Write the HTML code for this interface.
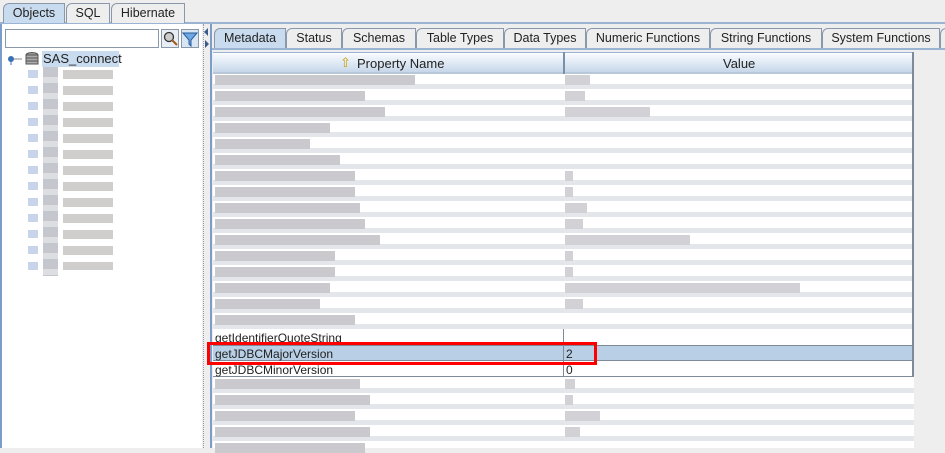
<!DOCTYPE html>
<html><head><meta charset="utf-8"><style>
*{box-sizing:border-box;margin:0;padding:0}
body{width:945px;height:448px;overflow:hidden;background:#eeeeee;font-family:"Liberation Sans",sans-serif;font-size:12px;color:#222;position:relative}
.a{position:absolute}
.tab{position:absolute;height:20px;border:1px solid #8a98aa;border-bottom:none;background:#eeeeee;font-size:12.5px;text-align:center;line-height:18px;border-radius:6px 0 0 0}
.sel{background:#c9dcef}
.b{position:absolute;height:10px;background:#cacace}
.v{position:absolute;height:10px;background:#d2d2d6}
.txt{position:absolute;left:215px;font-size:12px;line-height:16px}
</style></head><body>
<div class="a" style="left:0;top:22px;width:945px;height:2px;background:#9cb4d4"></div>
<div class="tab sel" style="left:3px;top:3px;width:62px;height:20px">Objects</div>
<div class="tab" style="left:66px;top:3px;width:44px">SQL</div>
<div class="tab" style="left:111px;top:3px;width:74px">Hibernate</div>
<div class="a" style="left:0;top:24px;width:202px;height:424px;background:#fff;border-left:2px solid #7e9cc8"></div>
<div class="a" style="left:5px;top:29px;width:154px;height:19px;border:1px solid #8a98aa;background:#fff"></div>
<div class="a" style="left:161px;top:29px;width:18px;height:19px;border:1px solid #8a98aa;background:#e8eef6"></div>
<svg class="a" style="left:162px;top:30px" width="17" height="17"><circle cx="7" cy="7" r="4.5" fill="#ccc" stroke="#333" stroke-width="1.3"/><line x1="10" y1="10" x2="15" y2="15" stroke="#a05a1c" stroke-width="2"/></svg>
<div class="a" style="left:181px;top:29px;width:18px;height:19px;border:1px solid #8a98aa;background:#d8e6f4"></div>
<svg class="a" style="left:182px;top:31px" width="17" height="16"><path d="M1 2 H15 L9 9 V15 L7 13 V9 Z" fill="#6fa8e0" stroke="#245a9a"/></svg>
<svg class="a" style="left:7px;top:53px" width="16" height="12"><circle cx="4" cy="6" r="3" fill="#3a70b8"/><line x1="4" y1="6" x2="4" y2="12" stroke="#3a70b8"/><line x1="7" y1="6" x2="15" y2="6" stroke="#888"/></svg>
<svg class="a" style="left:25px;top:52px" width="14" height="14"><ellipse cx="7" cy="3" rx="6" ry="2.5" fill="#999" stroke="#555"/><rect x="1" y="3" width="12" height="9" fill="#aaa" stroke="#555"/><line x1="1" y1="6" x2="13" y2="6" stroke="#555"/><line x1="1" y1="9" x2="13" y2="9" stroke="#555"/></svg>
<div class="a" style="left:42px;top:51px;width:77px;height:16px;background:#c9dcef;font-size:13px;line-height:16px;padding-left:1px">SAS_connect</div>
<div class="a" style="left:28px;top:70px;width:10px;height:200px;background:repeating-linear-gradient(#c8d4ea 0 8px,#fff 8px 16px)"></div>
<div class="a" style="left:43px;top:67px;width:15px;height:209px;background:repeating-linear-gradient(#c4c8ce 0 10px,#dcdee2 10px 16px)"></div>
<div class="a" style="left:63px;top:70px;width:50px;height:200px;background:repeating-linear-gradient(#d0cdcd 0 9px,#fff 9px 16px)"></div>
<div class="a" style="left:203px;top:24px;width:7px;height:424px;background:#eeeeee;border-left:1px dotted #99a"></div>
<div class="a" style="left:204px;top:28px;width:0;height:0;border:4px solid transparent;border-right:4px solid #3a5a8a;border-left:none"></div>
<div class="a" style="left:205px;top:40px;width:0;height:0;border:4px solid transparent;border-left:4px solid #3a5a8a;border-right:none"></div>
<div class="a" style="left:210px;top:24px;width:735px;height:424px;border-left:2px solid #7e9cc8;background:#eeeeee"></div>
<div class="a" style="left:212px;top:48px;width:733px;height:2px;background:#9cb4d4"></div>
<div class="tab sel" style="left:214px;top:28px;width:72px">Metadata</div>
<div class="tab" style="left:286px;top:28px;width:56px">Status</div>
<div class="tab" style="left:342px;top:28px;width:74px">Schemas</div>
<div class="tab" style="left:416px;top:28px;width:88px">Table Types</div>
<div class="tab" style="left:504px;top:28px;width:82px">Data Types</div>
<div class="tab" style="left:586px;top:28px;width:124px">Numeric Functions</div>
<div class="tab" style="left:710px;top:28px;width:112px">String Functions</div>
<div class="tab" style="left:822px;top:28px;width:118px">System Functions</div>
<div class="tab" style="left:940px;top:28px;width:10px"></div>
<div class="a" style="left:213px;top:52px;width:701px;height:396px;background:repeating-linear-gradient(#fff 0 11px,#e3e6ea 11px 16px);background-position:0 21px"></div>
<div class="a" style="left:213px;top:52px;width:701px;height:22px;background:linear-gradient(#fafcff,#c6d7ea);border-top:1px solid #9cb4d4;border-bottom:2px solid #b8c8d8"></div>
<div class="a" style="left:563px;top:52px;width:2px;height:22px;background:#7890a8"></div>
<div class="a" style="left:912px;top:52px;width:2px;height:325px;background:#7f8a99"></div>
<div class="a" style="left:340px;top:55px;font-size:13px;color:#c9a000">⇧</div>
<div class="a" style="left:357px;top:56px;font-size:13px">Property Name</div>
<div class="a" style="left:723px;top:56px;font-size:13px">Value</div>
<div class="b" style="left:215px;top:75px;width:200px"></div><div class="v" style="left:565px;top:75px;width:25px"></div>
<div class="b" style="left:215px;top:91px;width:150px"></div><div class="v" style="left:565px;top:91px;width:20px"></div>
<div class="b" style="left:215px;top:107px;width:170px"></div><div class="v" style="left:565px;top:107px;width:85px"></div>
<div class="b" style="left:215px;top:123px;width:115px"></div>
<div class="b" style="left:215px;top:139px;width:95px"></div>
<div class="b" style="left:215px;top:155px;width:125px"></div>
<div class="b" style="left:215px;top:171px;width:140px"></div><div class="v" style="left:565px;top:171px;width:8px"></div>
<div class="b" style="left:215px;top:187px;width:140px"></div><div class="v" style="left:565px;top:187px;width:8px"></div>
<div class="b" style="left:215px;top:203px;width:145px"></div><div class="v" style="left:565px;top:203px;width:22px"></div>
<div class="b" style="left:215px;top:219px;width:150px"></div><div class="v" style="left:565px;top:219px;width:18px"></div>
<div class="b" style="left:215px;top:235px;width:165px"></div><div class="v" style="left:565px;top:235px;width:125px"></div>
<div class="b" style="left:215px;top:251px;width:120px"></div><div class="v" style="left:565px;top:251px;width:8px"></div>
<div class="b" style="left:215px;top:267px;width:120px"></div><div class="v" style="left:565px;top:267px;width:8px"></div>
<div class="b" style="left:215px;top:283px;width:115px"></div><div class="v" style="left:565px;top:283px;width:235px"></div>
<div class="b" style="left:215px;top:299px;width:105px"></div><div class="v" style="left:565px;top:299px;width:18px"></div>
<div class="b" style="left:215px;top:315px;width:140px"></div>
<div class="a" style="left:213px;top:329px;width:699px;height:48px;background:#fff"></div>
<div class="a" style="left:213px;top:345px;width:699px;height:16px;background:#b8cfe6;border-top:1px solid #7f8a99;border-bottom:1px solid #7f8a99"></div>
<div class="a" style="left:213px;top:376px;width:701px;height:1px;background:#7f8a99"></div>
<div class="a" style="left:563px;top:329px;width:1px;height:48px;background:#7f8a99"></div>
<div class="txt" style="top:330px">getIdentifierQuoteString</div>
<div class="txt" style="top:346px">getJDBCMajorVersion</div>
<div class="txt" style="top:362px">getJDBCMinorVersion</div>
<div class="a" style="left:566px;top:346px;line-height:16px">2</div>
<div class="a" style="left:566px;top:362px;line-height:16px">0</div>
<div class="a" style="left:207px;top:342px;width:390px;height:23px;border:3px solid #f00"></div>
<div class="b" style="left:215px;top:379px;width:145px"></div><div class="v" style="left:565px;top:379px;width:10px"></div>
<div class="b" style="left:215px;top:395px;width:155px"></div><div class="v" style="left:565px;top:395px;width:8px"></div>
<div class="b" style="left:215px;top:411px;width:140px"></div><div class="v" style="left:565px;top:411px;width:35px"></div>
<div class="b" style="left:215px;top:427px;width:155px"></div><div class="v" style="left:565px;top:427px;width:15px"></div>
<div class="b" style="left:215px;top:443px;width:150px"></div>
</body></html>
